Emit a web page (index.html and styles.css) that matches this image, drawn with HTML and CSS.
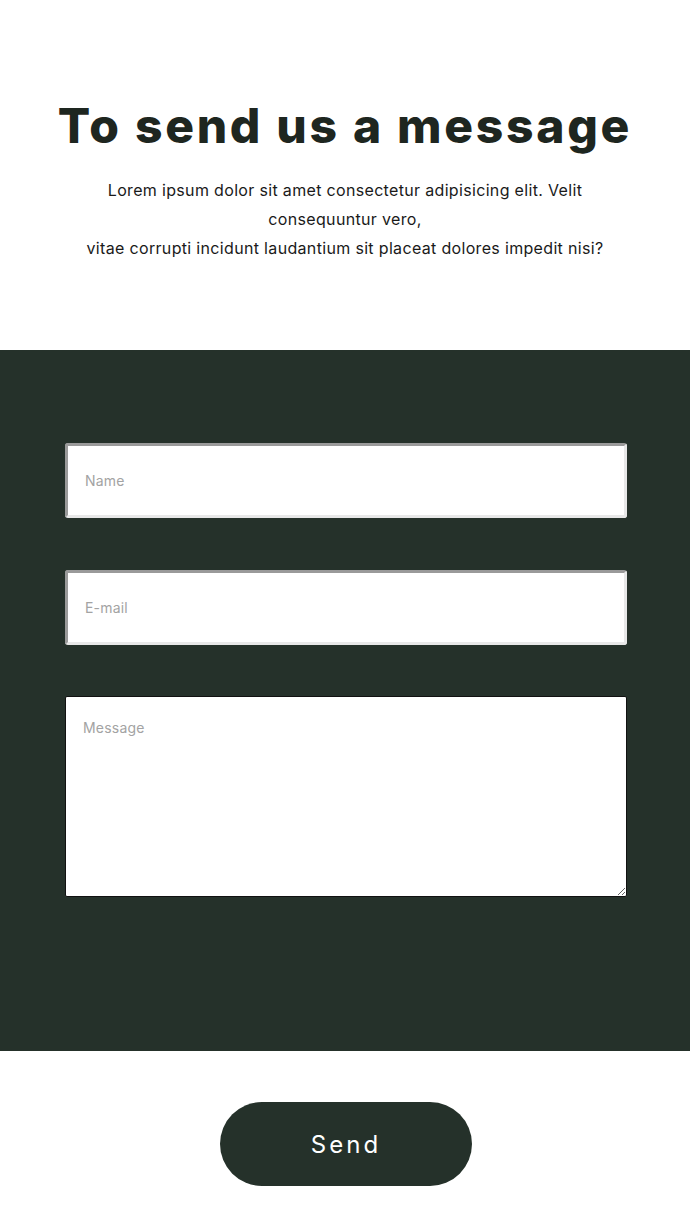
FILE: index.html
```html
<!DOCTYPE html>
<html lang="en">
<head>
<meta charset="utf-8">
<title>Contact</title>
<link rel="stylesheet" href="styles.css">
</head>
<body>
<header class="intro">
  <h1 class="title">To send us a message</h1>
  <p class="lead">Lorem ipsum dolor sit amet consectetur adipisicing elit. Velit consequuntur vero,<br>vitae corrupti incidunt laudantium sit placeat dolores impedit nisi?</p>
</header>
<section class="form-area">
  <form class="form">
    <input class="field" type="text" placeholder="Name">
    <input class="field" type="email" placeholder="E-mail">
    <textarea class="area" placeholder="Message"></textarea>
  </form>
</section>
<div class="actions">
  <button class="send" type="button">Send</button>
</div>
</body>
</html>
```
FILE: styles.css
```css
* { box-sizing: border-box; }
html, body { margin: 0; padding: 0; background: #fff; }
body { font-family: Inter, "Liberation Sans", sans-serif; color: #1f2721; }

.intro {
  height: 350px;
  padding-top: 97px;
  text-align: center;
}
.title {
  margin: 0;
  font-size: 48px;
  font-weight: 800;
  letter-spacing: 2.7px;
  line-height: 58px;
  color: #1e2620;
}
.lead {
  margin: 21px auto 0;
  max-width: 560px;
  font-size: 16px;
  letter-spacing: 0.33px;
  line-height: 29px;
  color: #1a1a1a;
}

.form-area {
  background: #25312a;
  padding: 93px 63px 154px 65px;
}
.form {
  display: flex;
  flex-direction: column;
  gap: 52px;
}
.field {
  display: block;
  width: 100%;
  height: 75px;
  padding: 0 17px;
  border: 3px solid;
  border-color: #9a9a9a #e8e8e8 #e8e8e8 #9a9a9a;
  border-radius: 3px;
  background: #fff;
  font-family: Inter, "Liberation Sans", sans-serif;
  font-size: 14px;
  letter-spacing: 0.2px;
  color: #222;
  outline: none;
}
.area {
  display: block;
  width: 100%;
  height: 201px;
  margin-top: -1px;
  padding: 22px 17px;
  border: 1px solid #111;
  border-radius: 2px;
  background: #fff;
  font-family: Inter, "Liberation Sans", sans-serif;
  font-size: 14px;
  letter-spacing: 0.2px;
  color: #222;
  resize: vertical;
  outline: none;
}
.field::placeholder, .area::placeholder { color: #a3a3a3; }

.actions {
  display: flex;
  justify-content: center;
  padding: 51px 0 46px;
}
.send {
  width: 252px;
  height: 84px;
  margin-left: 2px;
  border: none;
  border-radius: 42px;
  background: #25312a;
  color: #fff;
  font-family: Inter, "Liberation Sans", sans-serif;
  font-size: 24px;
  font-weight: 400;
  letter-spacing: 3px;
  cursor: pointer;
}
```
